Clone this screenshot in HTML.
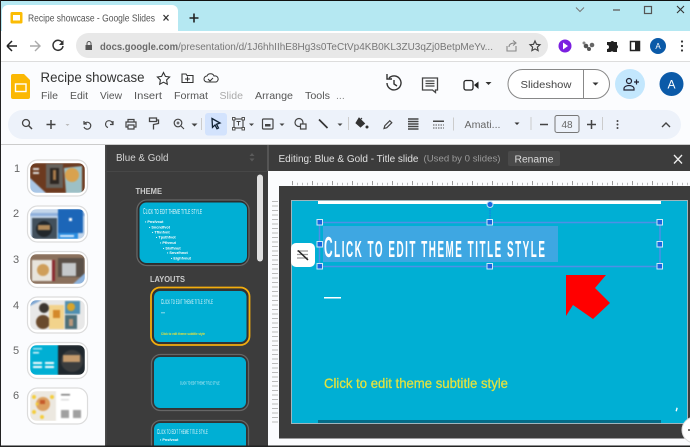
<!DOCTYPE html>
<html><head><meta charset="utf-8"><style>
html,body{margin:0;padding:0;background:#fff;width:690px;height:447px;overflow:hidden}
svg{display:block;filter:blur(.35px)}
text{font-family:"Liberation Sans",sans-serif}
.up{text-transform:uppercase}
.ph{filter:blur(.7px)}
</style></head><body>
<svg width="690" height="447" viewBox="0 0 690 447" xmlns="http://www.w3.org/2000/svg">
<defs>
<clipPath id="c1"><rect x="30" y="163" width="55" height="30" rx="7"/></clipPath>
<clipPath id="c2"><rect x="30" y="209" width="55" height="30" rx="7"/></clipPath>
<clipPath id="c3"><rect x="30" y="254" width="55" height="30" rx="7"/></clipPath>
<clipPath id="c4"><rect x="30" y="300" width="55" height="30" rx="7"/></clipPath>
<clipPath id="c5"><rect x="30" y="345" width="55" height="30" rx="7"/></clipPath>
<clipPath id="c6"><rect x="30" y="391" width="55" height="30" rx="7"/></clipPath>
</defs>
<!-- window -->
<rect width="690" height="447" fill="#fbfcfe"/>
<rect y="0" width="690" height="31" fill="#b5e8f2"/>
<rect width="690" height="1" fill="#111"/>
<path d="M2 31V11a6 6 0 0 1 6-6h164a6 6 0 0 1 6 6v20z" fill="#fff"/>
<rect x="10.500" y="12" width="12" height="11.500" rx="1.500" fill="#fbbc04"/><rect x="13" y="15" width="7" height="5.500" fill="#fff"/>
<text x="28" y="21.500" font-size="10" fill="#555" textLength="127" lengthAdjust="spacingAndGlyphs">Recipe showcase - Google Slides</text>
<path d="M163.500 15l5 5.500M168.500 15l-5 5.500" stroke="#333" stroke-width="1.300"/>
<path d="M194 13.500v9M189.500 18h9" stroke="#222" stroke-width="1.600"/>
<path d="M613 10h7" stroke="#666" stroke-width="1.400"/>
<rect x="644.500" y="6.500" width="7" height="7" fill="none" stroke="#555" stroke-width="1.200"/>
<path d="M677 6l7 7M684 6l-7 7" stroke="#333" stroke-width="1.100"/>
<path d="M576 7.500l4 4 4-4" stroke="#777" fill="none"/>
<!-- address row -->
<rect y="31" width="690" height="31" fill="#fff"/>
<rect y="61" width="690" height="1" fill="#ddd"/>
<path d="M7 46l5-5M7 46l5 5M7 46h10" stroke="#222" stroke-width="1.500" fill="none"/>
<path d="M30 46h9M35 41l5 5-5 5" stroke="#aaa" stroke-width="1.400" fill="none"/>
<path d="M62.500 43a5 5 0 1 0 .5 3" stroke="#333" stroke-width="1.500" fill="none"/><path d="M63.500 40v5h-4.500z" fill="#333"/>
<rect x="76" y="33" width="472" height="25" rx="12.500" fill="#e8e8e8"/>
<rect x="85.500" y="45" width="6.500" height="5" fill="#555"/><path d="M87 45v-1.500a2 2 0 0 1 4 0v1.500" stroke="#555" fill="none"/>
<text x="100" y="50" font-size="10.500" fill="#555" textLength="78" lengthAdjust="spacingAndGlyphs" font-weight="bold" opacity=".85">docs.google.com</text>
<text x="178" y="50" font-size="10.500" fill="#777" textLength="315" lengthAdjust="spacingAndGlyphs">/presentation/d/1J6hhIIhE8Hg3s0TeCtVp4KB0KL3ZU3qZj0BetpMeYv...</text>
<path d="M507 46v5h9v-5M509 47c0-3 3-4 6-4M513 40.500l3 2.500-3 2.500" stroke="#888" stroke-width="1.100" fill="none"/>
<path d="M535 41l1.500 3.300 3.500.4-2.600 2.400.7 3.500-3.100-1.700-3.100 1.700.7-3.500-2.600-2.400 3.500-.4z" fill="none" stroke="#444" stroke-width="1.200"/>
<circle cx="565" cy="46" r="6.500" fill="#7b1fe0"/><path d="M563 42.500l5 3.500-5 3.500z" fill="#fff"/>
<circle cx="586" cy="46" r="2.300" fill="#555"/><circle cx="592" cy="45" r="2.300" fill="#666"/><circle cx="589" cy="49" r="2" fill="#555"/><circle cx="584" cy="43" r="1.500" fill="#888"/>
<path d="M607 42h3.500a2 2 0 0 1 3.500 0h3v3a2 2 0 0 1 0 3.500v3.500h-3.500a2 2 0 0 0-3 0h-3.500v-3a2 2 0 0 0 0-4z" fill="#222"/>
<rect x="630.500" y="41.500" width="9" height="9" fill="none" stroke="#222" stroke-width="1.500"/><rect x="635" y="41.500" width="5" height="9" fill="#222"/>
<circle cx="658" cy="46" r="8" fill="#0b5aa8"/><text x="658" y="49" text-anchor="middle" font-size="8" fill="#fff">A</text>
<circle cx="682" cy="41.500" r="1.100" fill="#333"/><circle cx="682" cy="46" r="1.100" fill="#333"/><circle cx="682" cy="50.500" r="1.100" fill="#333"/>
<!-- docs header -->
<path d="M11 76a2 2 0 0 1 2-2h11l6 6v17a2 2 0 0 1-2 2H13a2 2 0 0 1-2-2z" fill="#fbb804"/><rect x="15.500" y="84" width="10.500" height="7.500" fill="none" stroke="#fff" stroke-width="1.400"/>
<text x="40.500" y="82" font-size="14" fill="#333" textLength="104" lengthAdjust="spacingAndGlyphs">Recipe showcase</text>
<path d="M163.500 72.500l1.900 3.900 4.200.6-3 3 .7 4.200-3.800-2-3.800 2 .7-4.200-3-3 4.200-.6z" fill="none" stroke="#333" stroke-width="1.100"/>
<path d="M182 74h4l1 1.500h6v7h-11zM187.500 76.500v5M185 79h5" fill="none" stroke="#333" stroke-width="1.100"/>
<path d="M207 82a3 3 0 0 1 0-6c1-3 6-3 7 0a3 3 0 0 1 2 6zM208 79l2 2 3-3" fill="none" stroke="#333" stroke-width="1"/>
<g font-size="10.500" fill="#555">
<text x="41" y="99" textLength="17" lengthAdjust="spacingAndGlyphs">File</text>
<text x="70" y="99" textLength="18" lengthAdjust="spacingAndGlyphs">Edit</text>
<text x="100" y="99" textLength="22" lengthAdjust="spacingAndGlyphs">View</text>
<text x="134" y="99" textLength="28" lengthAdjust="spacingAndGlyphs">Insert</text>
<text x="174" y="99" textLength="34" lengthAdjust="spacingAndGlyphs">Format</text>
<text x="219.500" y="99" textLength="23.500" lengthAdjust="spacingAndGlyphs" fill="#aaa">Slide</text>
<text x="255" y="99" textLength="38" lengthAdjust="spacingAndGlyphs">Arrange</text>
<text x="305" y="99" textLength="25" lengthAdjust="spacingAndGlyphs">Tools</text>
<text x="336" y="99" fill="#888">...</text>
</g>
<path d="M387 83a7 7 0 1 0 2-5M387 74v5h5M394 80v4l3 2" fill="none" stroke="#333" stroke-width="1.400"/>
<path d="M422.500 78h15v12h-2v2.500l-3-2.500h-10zM425.500 81h9M425.500 83.500h9M425.500 86h9" fill="none" stroke="#444" stroke-width="1.300"/>
<rect x="464" y="80.500" width="9" height="9.500" rx="2" fill="none" stroke="#222" stroke-width="1.300"/><path d="M474 85l4.500-3.500v7.500z" fill="#222"/><path d="M485.500 82l3 3 3-3z" fill="#333"/>
<rect x="508" y="69.500" width="101.500" height="29" rx="14.500" fill="#fff" stroke="#888"/>
<path d="M583.500 70v28" stroke="#888"/>
<text x="520.500" y="88" font-size="10.500" fill="#444" textLength="51" lengthAdjust="spacingAndGlyphs">Slideshow</text>
<path d="M592.500 82.500l3 3 3-3z" fill="#333"/>
<circle cx="630" cy="84" r="15" fill="#c3e7fd"/>
<circle cx="629" cy="81" r="2.500" fill="none" stroke="#223" stroke-width="1.200"/><path d="M624 90v-1.500c0-2 3-3 5-3s5 1 5 3v1.500zM634 82h5M636.500 79.500v5" fill="none" stroke="#223" stroke-width="1.200"/>
<circle cx="671.500" cy="84" r="12" fill="#0b5aa8"/><text x="671.500" y="88.500" text-anchor="middle" font-size="12" fill="#fff">A</text>
<!-- toolbar -->
<rect x="8" y="110" width="673" height="29" rx="14.500" fill="#edf2fa"/>
<rect y="144" width="690" height="1" fill="#ccc"/>
<circle cx="26" cy="123" r="3.500" fill="none" stroke="#444" stroke-width="1.300"/><path d="M28.500 125.500l3.500 3.500" stroke="#444" stroke-width="1.500"/>
<path d="M51 120v9M46.500 124.500h9" stroke="#444" stroke-width="1.500"/><path d="M65.500 124l2 2 2-2z" fill="#bbb"/>
<path d="M84 127a3.500 3.500 0 1 0 .5-3.500M84 121v3h3" fill="none" stroke="#444" stroke-width="1.200"/>
<path d="M108 127.500a3.500 3.500 0 1 1 4.500-4M113 121v3.500h-3" fill="none" stroke="#444" stroke-width="1.200"/>
<path d="M126 122h10v5h-2v-2h-6v2h-2zM128 122v-2.500h6v2.500M128 125h6v4h-6z" fill="none" stroke="#444" stroke-width="1.200"/>
<path d="M149.500 118h7v3.500h-7zM156.500 120h2v3.500l-5 1v5" fill="none" stroke="#444" stroke-width="1.300"/>
<circle cx="178" cy="123" r="3.800" fill="none" stroke="#444" stroke-width="1.200"/><path d="M181 126l3 3M176.500 123h3M178 121.500v3" stroke="#444" stroke-width="1.100"/><path d="M191.500 123.500l3 3 3-3z" fill="#444"/>
<path d="M201.500 118v12" stroke="#ccc"/>
<rect x="205" y="113" width="22" height="22.500" rx="3" fill="#d3e3fd"/>
<path d="M212 118.500l8 4.500-3.500 1.200 2 3.800-1.500.8-2-3.800-2.500 2.300z" fill="none" stroke="#123" stroke-width="1.300"/>
<rect x="234" y="119" width="9" height="9" fill="none" stroke="#444" stroke-width="1.100"/><g fill="#fff" stroke="#444" stroke-width=".9"><rect x="232.500" y="117.500" width="2.500" height="2.500"/><rect x="242" y="117.500" width="2.500" height="2.500"/><rect x="232.500" y="127.500" width="2.500" height="2.500"/><rect x="242" y="127.500" width="2.500" height="2.500"/></g><path d="M236.500 121.500h4M238.500 121.500v4" stroke="#444"/>
<path d="M249 123.500l2.500 2.500 2.500-2.500z" fill="#444"/>
<rect x="262.500" y="119" width="10.500" height="10" rx="1" fill="none" stroke="#444" stroke-width="1.200"/><rect x="265" y="124" width="5.500" height="2.500" fill="#444"/>
<path d="M279.500 123.500l2.500 2.500 2.500-2.500z" fill="#444"/>
<circle cx="299" cy="122.500" r="4" fill="none" stroke="#444" stroke-width="1.200"/><rect x="300.500" y="124" width="5.500" height="5" fill="#edf2fa" stroke="#444" stroke-width="1.200"/>
<path d="M319 119.500l8.500 8.500" stroke="#333" stroke-width="1.700"/>
<path d="M337.500 123.500l2.500 2.500 2.500-2.500z" fill="#444"/>
<path d="M348.500 117v13" stroke="#ccc"/>
<path d="M359 118l5.500 5.500-4 3.500-4.500-4zM362 118l-3 3" fill="#333" stroke="#333"/><circle cx="367" cy="127" r="1.500" fill="#333"/>
<path d="M384 128.500l.8-2.800 5-5 2 2-5 5z" fill="none" stroke="#444" stroke-width="1.200"/>
<path d="M408 119h10.500M408 121.500h10.500M408 124h10.500M408 126.500h10.500M408 129h10.500" stroke="#444" stroke-width="1.500"/>
<rect x="433" y="120.500" width="11" height="1.500" fill="#444"/><path d="M433 125h11M433 128h11" stroke="#555" stroke-dasharray="1.500 1"/>
<path d="M453.500 117.500v13" stroke="#ccc"/>
<text x="464.500" y="128" font-size="10" fill="#666" textLength="36" lengthAdjust="spacingAndGlyphs">Amati...</text>
<path d="M514.500 122.500l2.500 2.500 2.500-2.500z" fill="#333"/>
<path d="M531 117v13" stroke="#ccc"/>
<path d="M540 124.500h8" stroke="#444" stroke-width="1.500"/>
<rect x="555" y="115.500" width="24" height="17" rx="2" fill="none" stroke="#777"/><text x="567" y="128" text-anchor="middle" font-size="10" fill="#666">48</text>
<path d="M591.500 120v9M587 124.500h9" stroke="#444" stroke-width="1.500"/>
<path d="M602.500 117v13" stroke="#ccc"/>
<circle cx="617.500" cy="121" r="1" fill="#444"/><circle cx="617.500" cy="124.500" r="1" fill="#444"/><circle cx="617.500" cy="128" r="1" fill="#444"/>
<path d="M662 127l4-4 4 4" fill="none" stroke="#444" stroke-width="1.400"/>
<!-- filmstrip -->
<rect y="145" width="105" height="302" fill="#fbfcfe"/>
<g font-size="11" fill="#666">
<text x="14" y="172">1</text><text x="13" y="217">2</text><text x="13" y="263">3</text><text x="13" y="309">4</text><text x="13" y="354">5</text><text x="13" y="399">6</text>
</g>
<g fill="#fff" stroke="#dcdcdc" stroke-width="1.200">
<rect x="27.500" y="160" width="60" height="36" rx="10"/><rect x="27.500" y="206" width="60" height="36" rx="10"/><rect x="27.500" y="251.500" width="60" height="36" rx="10"/><rect x="27.500" y="297" width="60" height="36" rx="10"/><rect x="27.500" y="342.500" width="60" height="36" rx="10"/><rect x="27.500" y="388" width="60" height="36" rx="10"/>
</g>
<g clip-path="url(#c1)"><g class="ph"><rect x="30" y="163" width="55" height="30" fill="#6c3a1f"/><path d="M30 178l16 15H30z" fill="#a9c6e6"/><rect x="33" y="168" width="6" height="2" fill="#ddd"/><rect x="33" y="172" width="6" height="2" fill="#ddd"/><rect x="46" y="164" width="17" height="24" fill="#66625c"/><rect x="50" y="168" width="9" height="16" fill="#2d2722"/><rect x="53" y="170" width="3" height="10" fill="#a87a4a"/><path d="M64 168l18-2v27H66z" fill="#9dc0c6"/><circle cx="72" cy="175" r="7" fill="#d9a24e"/></g></g>
<g clip-path="url(#c2)"><g class="ph"><rect x="30" y="209" width="55" height="30" fill="#c4d6ea"/><rect x="30" y="213" width="55" height="3" fill="#8fb0db"/><rect x="32" y="218" width="25" height="21" fill="#42505c"/><circle cx="44" cy="229" r="8" fill="#22272b"/><rect x="38" y="225" width="12" height="5" fill="#b18a5a"/><rect x="58" y="209" width="25" height="24" fill="#1c66b8"/><rect x="69" y="218" width="3" height="3" fill="#fff"/><rect x="58" y="233" width="20" height="6" fill="#2a8de0"/><rect x="60" y="235" width="14" height="2" fill="#dcecff"/></g></g>
<g clip-path="url(#c3)"><g class="ph"><rect x="30" y="254" width="55" height="30" fill="#8a705c"/><rect x="32" y="260" width="20" height="21" fill="#e8e4dc"/><circle cx="43" cy="270" r="6" fill="#cf9e5a"/><rect x="52" y="260" width="3" height="21" fill="#8a2a30"/><rect x="58" y="258" width="26" height="19" fill="#5a5048"/><rect x="62" y="263" width="14" height="13" fill="#c5c8ca"/><path d="M73 284l12-11v11z" fill="#8eb3dc"/></g></g>
<g clip-path="url(#c4)"><g class="ph"><rect x="30" y="300" width="55" height="30" fill="#e8e8e8"/><path d="M30 306l12-6H30z" fill="#7ea6d2"/><circle cx="44" cy="308" r="5" fill="#3c3630"/><circle cx="43" cy="322" r="7" fill="#6a4a2c"/><rect x="49" y="305" width="15" height="24" fill="#f2d38c"/><rect x="53" y="310" width="7" height="8" fill="#d4892a"/><rect x="65" y="301" width="15" height="13" fill="#4f8fb0"/><circle cx="71" cy="307" r="4" fill="#d9a52a"/><rect x="65" y="315" width="12" height="14" fill="#4d6f78"/><rect x="69" y="319" width="4" height="7" fill="#b8967a"/></g></g>
<g clip-path="url(#c5)"><g class="ph"><rect x="30" y="345" width="28" height="30" fill="#00afd4"/><rect x="58" y="345" width="27" height="30" fill="#20282e"/><circle cx="72" cy="361" r="11" fill="#3b3d3e"/><rect x="63" y="355" width="17" height="7" fill="#c49a6c"/><g fill="#fff"><rect x="33" y="348" width="9" height="1.500" opacity=".7"/><rect x="33" y="352" width="6" height="1.500" opacity=".9"/><rect x="33" y="362" width="9" height="2"/><rect x="33" y="366" width="9" height="2"/><rect x="45" y="362" width="9" height="2"/><rect x="45" y="366" width="9" height="2"/></g></g></g>
<g clip-path="url(#c6)"><g class="ph"><rect x="30" y="391" width="55" height="30" fill="#fff"/><rect x="30" y="391" width="26" height="30" fill="#ece8e0"/><circle cx="43" cy="404" r="7" fill="#dca060"/><g fill="#f4cd3a"><circle cx="34" cy="397" r="2"/><circle cx="52" cy="397" r="2"/><circle cx="34" cy="412" r="2"/><circle cx="42" cy="417" r="2"/><circle cx="37" cy="404" r="1.500"/></g><rect x="40" y="400" width="5" height="4" fill="#c55a2a"/><g fill="#777"><rect x="61" y="394" width="9" height="1.500"/><rect x="61" y="410" width="8" height="8" opacity=".7"/><rect x="73" y="410" width="8" height="8" opacity=".7"/></g><rect x="61" y="399" width="8" height="1.500" fill="#ddd"/></g></g>
<!-- theme panel -->
<rect x="105" y="145" width="585" height="302" fill="#3c3c3c"/>
<rect x="105" y="145" width="1.500" height="302" fill="#4a4a4a"/>
<text x="116" y="161" font-size="10" fill="#d5d5d5" textLength="52.500" lengthAdjust="spacingAndGlyphs">Blue &amp; Gold</text>
<path d="M249.500 156l2.500-3 2.500 3zM249.500 158.500l2.500 3 2.500-3z" fill="#5a5a5a"/>
<rect x="105" y="171" width="162" height="1" fill="#474747"/>
<rect x="257" y="174.500" width="6" height="87" rx="3" fill="#e0e0e0"/>
<rect x="267" y="145" width="2" height="26" fill="#555"/>
<text x="135.500" y="194" font-size="8.500" font-weight="bold" fill="#ccc" textLength="26.500" lengthAdjust="spacingAndGlyphs">THEME</text>
<text x="150" y="282" font-size="8.500" font-weight="bold" fill="#ccc" textLength="35" lengthAdjust="spacingAndGlyphs">LAYOUTS</text>
<!-- theme thumb -->
<rect x="137" y="200" width="112" height="65.500" rx="10" fill="#2d2d2d" stroke="#666" stroke-width="1.300"/>
<rect x="139.500" y="202.500" width="107.500" height="60.500" rx="7" fill="#00afd4"/>
<text transform="translate(143 214) scale(.45 1)" font-size="7" fill="#eaf8fb" textLength="131" lengthAdjust="spacing"><tspan font-size="8">C</tspan><tspan class="up">lick to edit theme title style</tspan></text>
<g font-size="3.800" font-weight="bold" fill="#fff">
<text x="145" y="223">▪ Pnsfvxut</text><text x="149" y="228.500">▪ Sncndfvot</text><text x="152" y="233.500">▪ Tfhnfvnt</text><text x="156" y="238.500">▪ Tpsthfvot</text><text x="160" y="244">▪ Pfhrnut</text><text x="163" y="249.500">▪ Slxfhnut</text><text x="167" y="254">▪ Snvzfhnot</text><text x="171" y="259.500">▪ Eighfvnut</text>
</g>
<!-- layout 1 -->
<rect x="151" y="287.500" width="98.500" height="57.500" rx="9" fill="#333" stroke="#f3ad0e" stroke-width="1.800"/>
<rect x="154" y="291" width="92.500" height="51" rx="6" fill="#00afd4"/>
<text transform="translate(161 304) scale(.45 1)" font-size="6" fill="#eaf8fb" textLength="115.500" lengthAdjust="spacing"><tspan font-size="7">C</tspan><tspan class="up">lick to edit theme title style</tspan></text>
<rect x="161" y="312.500" width="4" height=".7" fill="#cfeef6"/>
<text x="161" y="335" font-size="3.800" font-weight="bold" fill="#e8e23a" textLength="44" lengthAdjust="spacingAndGlyphs">Click to edit theme subtitle style</text>
<!-- layout 2 -->
<rect x="151.500" y="354.500" width="97" height="56" rx="9" fill="#333" stroke="#666" stroke-width="1.300"/>
<rect x="154" y="357" width="92" height="51" rx="6" fill="#00afd4"/>
<text transform="translate(180 384.500) scale(.45 1)" font-size="4.500" fill="#eaf8fb" textLength="88" lengthAdjust="spacing"><tspan font-size="5">C</tspan><tspan class="up">lick to edit theme title style</tspan></text>
<!-- layout 3 -->
<rect x="151.500" y="420.500" width="97" height="40" rx="9" fill="#333" stroke="#666" stroke-width="1.300"/>
<rect x="154" y="423" width="92" height="40" rx="6" fill="#00afd4"/>
<text transform="translate(157 434) scale(.45 1)" font-size="6" fill="#eaf8fb" textLength="113" lengthAdjust="spacing"><tspan font-size="7">C</tspan><tspan class="up">lick to edit theme title style</tspan></text>
<text x="160" y="441" font-size="3.800" font-weight="bold" fill="#fff">▪ Pnsfvxut</text>
<!-- editor -->
<text x="278.500" y="162" font-size="10" fill="#e0e0e0" textLength="140" lengthAdjust="spacingAndGlyphs">Editing: Blue &amp; Gold - Title slide</text>
<text x="423.500" y="161.500" font-size="9" fill="#9a9a9a" textLength="77" lengthAdjust="spacingAndGlyphs">(Used by 0 slides)</text>
<rect x="508" y="151" width="52" height="15" rx="2" fill="#4a4a4a"/>
<text x="514.500" y="162.500" font-size="10" fill="#ddd" textLength="39" lengthAdjust="spacingAndGlyphs">Rename</text>
<path d="M674 155l8 8.500M682 155l-8 8.500" stroke="#eee" stroke-width="1.300"/>
<rect x="268" y="171" width="422" height="276" fill="#fbfcfe"/>
<path d="M292 184h398" stroke="#bbb" stroke-width="2.500" stroke-dasharray="1 4"/>
<path d="M292 183h398" stroke="#999" stroke-width="4" stroke-dasharray="1 19"/>
<path d="M275 201v225" stroke="#bbb" stroke-width="6" stroke-dasharray="1 3.500"/>
<rect x="279" y="186" width="411" height="252.500" fill="#3c3c3c"/>
<rect x="291.500" y="200.500" width="396" height="223" fill="#00afd4" stroke="#9fb6bd"/>
<rect x="318" y="201" width="343" height="3" fill="#fff"/>
<rect x="318" y="420" width="343" height="3" fill="#056d88"/>
<rect x="323" y="226" width="235" height="36" fill="#3ea7e2"/>
<text transform="translate(324 257) scale(.42 1)" font-size="23.500" font-weight="bold" fill="#fff" textLength="526" lengthAdjust="spacing"><tspan font-size="28.500">C</tspan><tspan class="up">lick to edit theme title style</tspan></text>
<rect x="324" y="297" width="17" height="1.500" fill="#fff"/>
<text x="324" y="388" font-size="14" fill="#e3e23e" stroke="#e3e23e" stroke-width=".25" textLength="184" lengthAdjust="spacingAndGlyphs">Click to edit theme subtitle style</text>
<path d="M675.500 411l1-3.500 1.300.5-1 3.500z" fill="#fff"/>
<!-- selection -->
<rect x="319.500" y="222.500" width="340.500" height="44" fill="none" stroke="#4f8fe6" stroke-width="1.500"/>
<path d="M490 205v17" stroke="#1a73e8" stroke-dasharray="1.500 1"/>
<circle cx="490" cy="204.500" r="3" fill="#1a66e0" stroke="#bfe4f4"/>
<g fill="#1a66e0" stroke="#cfe9f6">
<rect x="317" y="219.500" width="5.500" height="5.500"/><rect x="487" y="219.500" width="5.500" height="5.500"/><rect x="657" y="219.500" width="5.500" height="5.500"/>
<rect x="317" y="241.500" width="5.500" height="5.500"/><rect x="657" y="241.500" width="5.500" height="5.500"/>
<rect x="317" y="263.500" width="5.500" height="5.500"/><rect x="487" y="263.500" width="5.500" height="5.500"/><rect x="657" y="263.500" width="5.500" height="5.500"/>
</g>
<rect x="291" y="243" width="24" height="24" rx="5" fill="#fff"/>
<path d="M297 251h11M297 254.500h11M297 258h11" stroke="#999" stroke-width="1.200"/><path d="M298 250.500l10 9.500" stroke="#222" stroke-width="1.500"/>
<!-- arrow -->
<path d="M566 275h40l-11 13 15 15-17 16-20-14-7 11z" fill="#ff0000"/>
<circle cx="695" cy="430" r="13" fill="#fff" stroke="#ddd"/><circle cx="689" cy="430" r="1" fill="#444"/>
<rect y="445.500" width="690" height="1.500" fill="#222"/>
<rect width="1" height="447" fill="#222"/>
</svg>
</body></html>
